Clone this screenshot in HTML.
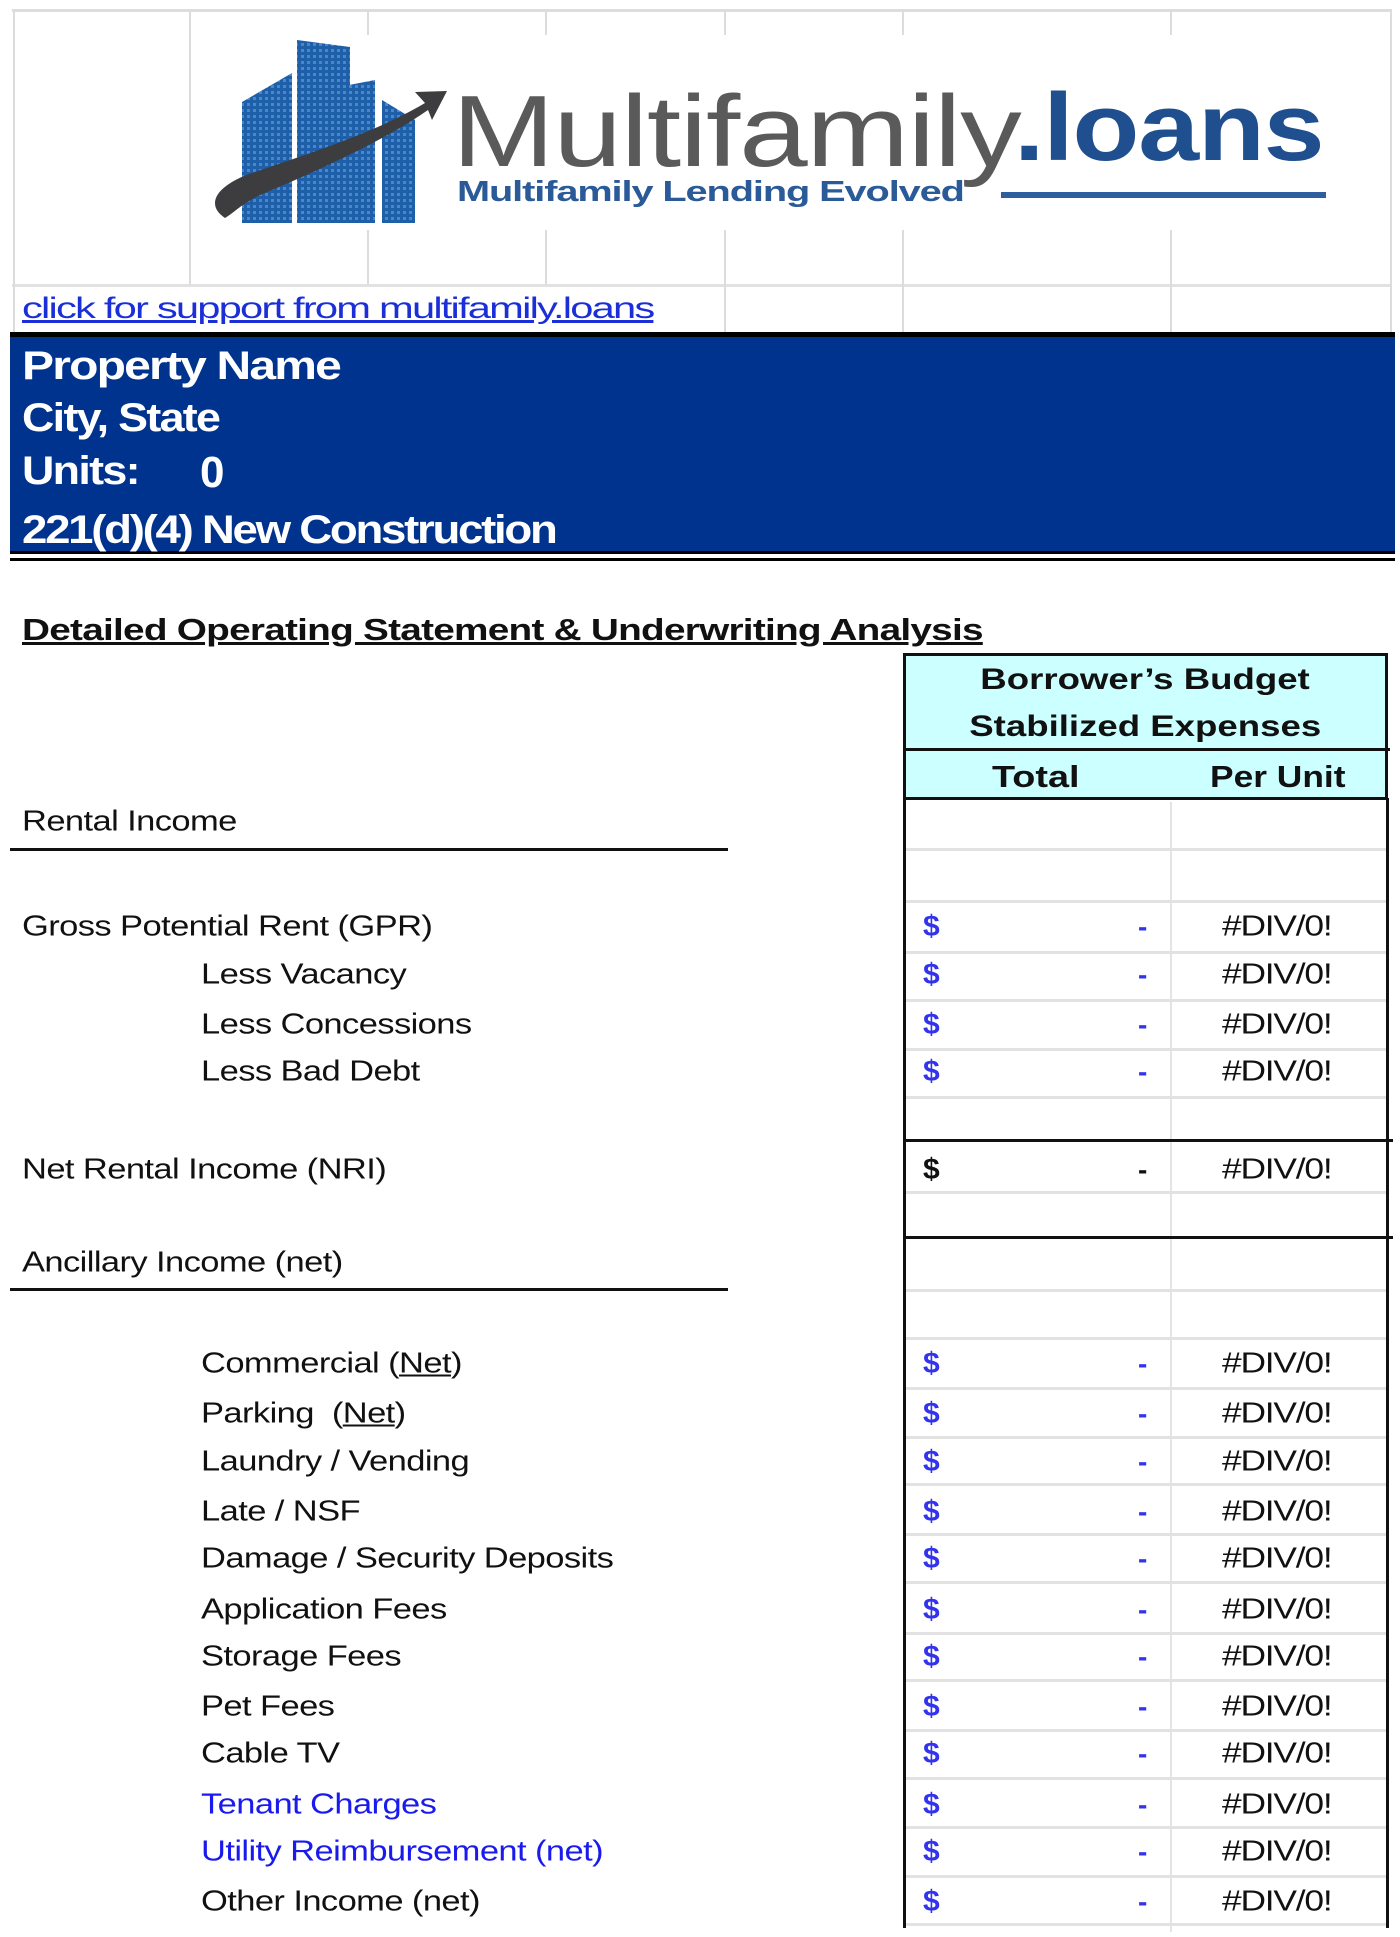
<!DOCTYPE html>
<html><head><meta charset="utf-8"><style>
body{margin:0;width:1400px;height:1937px;background:#fff;position:relative;overflow:hidden;font-family:"Liberation Sans",Arial,sans-serif;}
.a{position:absolute;white-space:nowrap;transform-origin:left top;}
.vl{position:absolute;width:2px;background:#dcdcdc;}
.hl{position:absolute;height:3px;background:#e2e2e2;}
.lab{position:absolute;font-size:29px;color:#111;line-height:1;transform:translateY(-50%) scaleX(1.19);transform-origin:left center;white-space:nowrap;letter-spacing:-0.5px;}
.d{position:absolute;left:923px;font-size:30px;font-weight:bold;color:#3333ee;transform:translateY(-50%);}
.m{position:absolute;left:1138px;font-size:28px;font-weight:bold;color:#3333ee;transform:translateY(-50%);}
.v{position:absolute;left:1222px;font-size:29px;color:#111;transform:translateY(-50%) scaleX(1.22);transform-origin:left center;letter-spacing:-1px;}
</style></head><body>
<!-- top grid -->
<div class="hl" style="left:12px;top:9px;width:1380px;background:#ddd"></div>
<div class="hl" style="left:12px;top:284px;width:1380px;"></div>
<div class="vl" style="left:13px;top:10px;height:323px"></div>
<div class="vl" style="left:189px;top:10px;height:275px"></div>
<div class="vl" style="left:367px;top:10px;height:275px"></div>
<div class="vl" style="left:545px;top:10px;height:275px"></div>
<div class="vl" style="left:724px;top:10px;height:323px"></div>
<div class="vl" style="left:902px;top:10px;height:323px"></div>
<div class="vl" style="left:1170px;top:10px;height:323px"></div>
<div class="vl" style="left:1390px;top:10px;height:323px"></div>
<!-- logo -->
<div style="position:absolute;left:200px;top:35px;width:1140px;height:195px;background:#fff"></div>
<svg class="a" style="left:200px;top:30px" width="260" height="210" viewBox="200 30 260 210">
<defs><pattern id="w" width="6" height="6" patternUnits="userSpaceOnUse"><rect width="6" height="6" fill="#1d5fa8"/><rect x="1" y="1" width="3" height="3" fill="#4a86c8"/></pattern></defs>
<polygon points="242,102 292,73 292,223 242,223" fill="url(#w)"/>
<polygon points="297,40 350,47 350,223 297,223" fill="url(#w)"/>
<polygon points="323,90 375,80 375,223 323,223" fill="url(#w)"/>
<polygon points="382,100 415,120 415,223 382,223" fill="url(#w)"/>
<path d="M225,218 C205,205 215,185 255,172 C320,150 380,130 425,103 L415,92 L447,91 L432,120 L428,110 C385,140 320,170 260,195 C240,205 235,212 225,218 Z" fill="#3d3d3f"/>
</svg>
<div class="a" style="left:452px;top:82px;font-size:101px;color:#5a5a5a;letter-spacing:-1px;line-height:1;transform:scaleX(1.22)">Multifamily</div>
<div class="a" style="left:1014px;top:80px;font-size:96px;color:#1f4f8f;font-weight:bold;line-height:1;letter-spacing:-1px;transform:scaleX(1.14)">.loans</div>
<div class="a" style="left:457px;top:178px;font-size:29px;color:#2b5a98;font-weight:bold;letter-spacing:-0.8px;line-height:1;transform:scaleX(1.37)">Multifamily Lending Evolved</div>
<div class="a" style="left:1001px;top:192px;width:325px;height:6px;background:#2e5e9e"></div>
<!-- link -->
<div class="a" style="left:22px;top:294px;font-size:30px;color:#1a2fd8;text-decoration:underline;letter-spacing:-1.3px;line-height:1;transform:scaleX(1.39)">click for support from multifamily.loans</div>
<!-- blue band -->
<div class="a" style="left:10px;top:332px;width:1385px;height:5px;background:#000"></div>
<div class="a" style="left:10px;top:337px;width:1385px;height:214px;background:#00338d"></div>
<div class="a" style="left:10px;top:551px;width:1385px;height:3px;background:#000"></div>
<div class="a" style="left:10px;top:558px;width:1385px;height:3px;background:#000"></div>
<div class="a" style="left:22px;top:346px;color:#fff;font-weight:bold;font-size:40px;letter-spacing:-1.5px;line-height:1;transform:scaleX(1.2)">Property Name</div>
<div class="a" style="left:22px;top:398px;color:#fff;font-weight:bold;font-size:40px;letter-spacing:-1.5px;line-height:1;transform:scaleX(1.12)">City, State</div>
<div class="a" style="left:22px;top:451px;color:#fff;font-weight:bold;font-size:40px;letter-spacing:-1.5px;line-height:1;transform:scaleX(1.12)">Units:</div>
<div class="a" style="left:200px;top:451px;color:#fff;font-weight:bold;font-size:44px;line-height:1">0</div>
<div class="a" style="left:22px;top:510px;color:#fff;font-weight:bold;font-size:40px;letter-spacing:-2px;line-height:1;transform:scaleX(1.14)">221(d)(4) New Construction</div>
<!-- title -->
<div class="a" style="left:22px;top:614px;font-size:31px;font-weight:bold;text-decoration:underline;letter-spacing:-0.6px;line-height:1;color:#111;transform:scaleX(1.25)">Detailed Operating Statement &amp; Underwriting Analysis</div>
<!-- table header -->
<div class="a" style="left:903px;top:653px;width:485px;height:147px;background:#ccffff;border:3px solid #111;box-sizing:border-box;"></div>
<div class="a" style="left:903px;top:748px;width:487px;height:3px;background:#111"></div>
<div class="a" style="left:903px;top:656px;width:485px;text-align:center;font-size:30px;font-weight:bold;line-height:47px;color:#111;"><span style="display:inline-block;transform:scaleX(1.22)">Borrower’s Budget</span><br><span style="display:inline-block;transform:scaleX(1.22)">Stabilized Expenses</span></div>
<div class="a" style="left:992px;top:757px;font-size:31px;font-weight:bold;color:#111;line-height:40px;transform:scaleX(1.22)">Total</div>
<div class="a" style="left:1210px;top:757px;font-size:31px;font-weight:bold;color:#111;line-height:40px;transform:scaleX(1.14)">Per Unit</div>
<div class="a" style="left:903px;top:798px;width:3px;height:1130px;background:#111"></div>
<div class="a" style="left:1386px;top:798px;width:3px;height:1130px;background:#111"></div>
<div class="vl" style="left:1170px;top:802px;height:1130px;background:#e4e4e4"></div>
<div class="hl" style="left:906px;top:848px;width:480px"></div>
<div class="hl" style="left:906px;top:900px;width:480px"></div>
<div class="hl" style="left:906px;top:951px;width:480px"></div>
<div class="hl" style="left:906px;top:999px;width:480px"></div>
<div class="hl" style="left:906px;top:1048px;width:480px"></div>
<div class="hl" style="left:906px;top:1096px;width:480px"></div>
<div class="a" style="left:903px;top:1139px;width:490px;height:3px;background:#111"></div>
<div class="hl" style="left:906px;top:1191px;width:480px"></div>
<div class="a" style="left:903px;top:1236px;width:490px;height:3px;background:#111"></div>
<div class="hl" style="left:906px;top:1289px;width:480px"></div>
<div class="hl" style="left:906px;top:1337px;width:480px"></div>
<div class="hl" style="left:906px;top:1387px;width:480px"></div>
<div class="hl" style="left:906px;top:1436px;width:480px"></div>
<div class="hl" style="left:906px;top:1483px;width:480px"></div>
<div class="hl" style="left:906px;top:1533px;width:480px"></div>
<div class="hl" style="left:906px;top:1581px;width:480px"></div>
<div class="hl" style="left:906px;top:1632px;width:480px"></div>
<div class="hl" style="left:906px;top:1679px;width:480px"></div>
<div class="hl" style="left:906px;top:1729px;width:480px"></div>
<div class="hl" style="left:906px;top:1777px;width:480px"></div>
<div class="hl" style="left:906px;top:1826px;width:480px"></div>
<div class="hl" style="left:906px;top:1875px;width:480px"></div>
<div class="hl" style="left:906px;top:1923px;width:480px"></div>
<!-- labels -->
<div class="lab" style="left:22px;top:822px">Rental Income</div>
<div class="a" style="left:10px;top:848px;width:718px;height:3px;background:#111"></div>
<div class="lab" style="left:22px;top:927px">Gross Potential Rent (GPR)</div>
<div class="lab" style="left:201px;top:975px">Less Vacancy</div>
<div class="lab" style="left:201px;top:1025px">Less Concessions</div>
<div class="lab" style="left:201px;top:1072px">Less Bad Debt</div>
<div class="lab" style="left:22px;top:1170px">Net Rental Income (NRI)</div>
<div class="lab" style="left:22px;top:1263px">Ancillary Income (net)</div>
<div class="a" style="left:10px;top:1288px;width:718px;height:3px;background:#111"></div>
<div class="lab" style="left:201px;top:1364px">Commercial (<u>Net</u>)</div>
<div class="lab" style="left:201px;top:1414px">Parking &nbsp;(<u>Net</u>)</div>
<div class="lab" style="left:201px;top:1462px">Laundry / Vending</div>
<div class="lab" style="left:201px;top:1512px">Late / NSF</div>
<div class="lab" style="left:201px;top:1559px">Damage / Security Deposits</div>
<div class="lab" style="left:201px;top:1610px">Application Fees</div>
<div class="lab" style="left:201px;top:1657px">Storage Fees</div>
<div class="lab" style="left:201px;top:1707px">Pet Fees</div>
<div class="lab" style="left:201px;top:1754px">Cable TV</div>
<div class="lab" style="left:201px;top:1805px;color:#1a1aee">Tenant Charges</div>
<div class="lab" style="left:201px;top:1852px;color:#1a1aee">Utility Reimbursement (net)</div>
<div class="lab" style="left:201px;top:1902px">Other Income (net)</div>
<!-- values -->
<div class="d" style="top:927px">$</div><div class="m" style="top:927px">-</div><div class="v" style="top:927px">#DIV/0!</div>
<div class="d" style="top:975px">$</div><div class="m" style="top:975px">-</div><div class="v" style="top:975px">#DIV/0!</div>
<div class="d" style="top:1025px">$</div><div class="m" style="top:1025px">-</div><div class="v" style="top:1025px">#DIV/0!</div>
<div class="d" style="top:1072px">$</div><div class="m" style="top:1072px">-</div><div class="v" style="top:1072px">#DIV/0!</div>
<div class="d" style="top:1170px;color:#111">$</div><div class="m" style="top:1170px;color:#111">-</div><div class="v" style="top:1170px">#DIV/0!</div>
<div class="d" style="top:1364px">$</div><div class="m" style="top:1364px">-</div><div class="v" style="top:1364px">#DIV/0!</div>
<div class="d" style="top:1414px">$</div><div class="m" style="top:1414px">-</div><div class="v" style="top:1414px">#DIV/0!</div>
<div class="d" style="top:1462px">$</div><div class="m" style="top:1462px">-</div><div class="v" style="top:1462px">#DIV/0!</div>
<div class="d" style="top:1512px">$</div><div class="m" style="top:1512px">-</div><div class="v" style="top:1512px">#DIV/0!</div>
<div class="d" style="top:1559px">$</div><div class="m" style="top:1559px">-</div><div class="v" style="top:1559px">#DIV/0!</div>
<div class="d" style="top:1610px">$</div><div class="m" style="top:1610px">-</div><div class="v" style="top:1610px">#DIV/0!</div>
<div class="d" style="top:1657px">$</div><div class="m" style="top:1657px">-</div><div class="v" style="top:1657px">#DIV/0!</div>
<div class="d" style="top:1707px">$</div><div class="m" style="top:1707px">-</div><div class="v" style="top:1707px">#DIV/0!</div>
<div class="d" style="top:1754px">$</div><div class="m" style="top:1754px">-</div><div class="v" style="top:1754px">#DIV/0!</div>
<div class="d" style="top:1805px">$</div><div class="m" style="top:1805px">-</div><div class="v" style="top:1805px">#DIV/0!</div>
<div class="d" style="top:1852px">$</div><div class="m" style="top:1852px">-</div><div class="v" style="top:1852px">#DIV/0!</div>
<div class="d" style="top:1902px">$</div><div class="m" style="top:1902px">-</div><div class="v" style="top:1902px">#DIV/0!</div>
</body></html>
